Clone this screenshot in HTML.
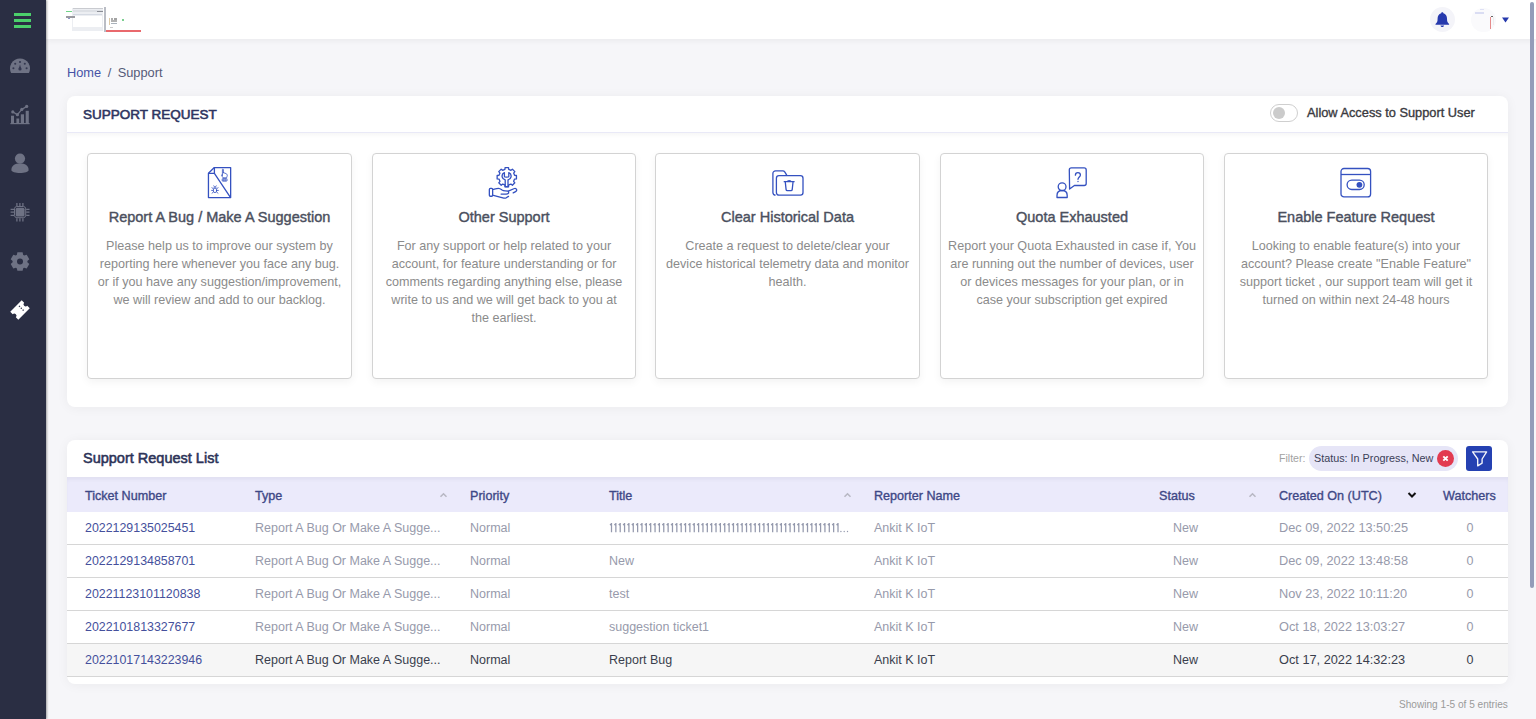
<!DOCTYPE html>
<html><head><meta charset="utf-8">
<style>
*{box-sizing:border-box;margin:0;padding:0}
html,body{width:1536px;height:719px;overflow:hidden;background:#f6f6f9;font-family:"Liberation Sans",sans-serif;position:relative}
.abs{position:absolute}
#side{left:0;top:0;width:46px;height:719px;background:#2a2e43;box-shadow:1px 0 2px rgba(0,0,0,0.35);z-index:5}
#hdr{left:46px;top:0;width:1490px;height:39px;background:#fff;box-shadow:0 2px 6px rgba(0,0,0,0.05)}
.t{position:absolute;white-space:nowrap;line-height:1}
.card{position:absolute;background:#fff;border-radius:8px;box-shadow:0 1px 12px rgba(0,0,0,0.05)}
.box{position:absolute;top:153px;width:265px;height:226px;border:1px solid #d3d3d3;border-radius:4px;background:#fff;box-shadow:0 3px 8px rgba(0,0,0,0.05)}
.box h3{position:absolute;left:0;right:0;top:210px;text-align:center;font-size:14.5px;font-weight:normal;-webkit-text-stroke:0.4px #4b505e;color:#4b505e;white-space:nowrap;line-height:16px}
.box p{position:absolute;left:-20px;right:-20px;white-space:nowrap;top:235px;text-align:center;font-size:12.6px;color:#8b8b8b;line-height:18.1px}
.th{position:absolute;top:489px;font-size:12.6px;font-weight:normal;-webkit-text-stroke:0.35px #3e4886;color:#3e4886;white-space:nowrap;line-height:14px}
.row{position:absolute;left:67px;width:1441px;height:33px;border-bottom:1px solid #d6d6d6;background:#fff}
.c{position:absolute;top:9px;font-size:12.5px;color:#979aab;white-space:nowrap;line-height:14px}
.c.num{color:#45509c;font-size:12.4px}
.row.hl{background:#f6f6f6}
.row.hl .c{color:#3a3e4d}
.row.hl .c.num{color:#45509c}
</style></head>
<body>
<div id="side" class="abs">
  <!-- hamburger -->
  <div class="abs" style="left:14px;top:13px;width:17px;height:2.5px;background:#4bcf6b"></div>
  <div class="abs" style="left:14px;top:19px;width:17px;height:2.5px;background:#4bcf6b"></div>
  <div class="abs" style="left:14px;top:25px;width:17px;height:2.5px;background:#4bcf6b"></div>
  <svg class="abs" style="left:10px;top:58px" width="20" height="16" viewBox="0 0 20 16">
    <path d="M1.1 15 A10 10 0 1 1 18.9 15 Z" fill="#6e7284"/>
    <g fill="#343850"><circle cx="10" cy="4" r="1.05"/><circle cx="5.2" cy="5.8" r="1.05"/><circle cx="14.8" cy="5.8" r="1.05"/><circle cx="3.4" cy="10.2" r="1.05"/><circle cx="16.6" cy="10.2" r="1.05"/><path d="M8.9 10.6 L10 6.4 L11.1 10.6 Z"/><circle cx="10" cy="10.9" r="1.6"/></g>
  </svg>
  <svg class="abs" style="left:10px;top:104px" width="20" height="21" viewBox="0 0 20 21">
    <g fill="#6e7284"><rect x="1" y="11.7" width="3" height="7.6"/><rect x="6.4" y="14.5" width="2.8" height="4.8"/><rect x="10.8" y="10.3" width="3.2" height="9"/><rect x="15.7" y="6.8" width="3.1" height="12.5"/><rect x="0.4" y="19" width="19.2" height="1.2"/>
    <circle cx="2.8" cy="7.9" r="1.6"/><circle cx="7.4" cy="10.7" r="1.6"/><circle cx="11.8" cy="5.4" r="1.6"/><circle cx="16.7" cy="2.4" r="1.6"/></g>
    <path d="M2.8 7.9 L7.4 10.7 L11.8 5.4 L16.7 2.4" stroke="#6e7284" stroke-width="1.3" fill="none"/>
  </svg>
  <svg class="abs" style="left:11px;top:153px" width="18" height="21" viewBox="0 0 18 21">
    <g fill="#6e7284"><circle cx="9" cy="5.6" r="5.1"/><path d="M0.4 17 C0.4 12.5 4 10.6 9 10.6 C14 10.6 17.6 12.5 17.6 17 C17.6 19 13.5 20 9 20 C4.5 20 0.4 19 0.4 17Z"/></g>
  </svg>
  <svg class="abs" style="left:10px;top:202px" width="21" height="21" viewBox="0 0 21 21">
    <g stroke="#6e7284" fill="none">
      <rect x="4.5" y="4.5" width="11.2" height="11.2" rx="2.4" stroke-width="1"/>
      <path d="M6.9 1V4M9.9 1V4M12.9 1V4M6.9 16.2V19.6M9.9 16.2V19.6M12.9 16.2V19.6M0.6 7.3H4M0.6 10.2H4M0.6 13.3H4M16.2 7.3H19.5M16.2 10.2H19.5M16.2 13.3H19.5" stroke-width="1.3"/>
    </g>
    <rect x="5.7" y="5.7" width="8.8" height="8.8" rx="1.6" fill="#6e7284"/>
  </svg>
  <svg class="abs" style="left:10px;top:251.6px" width="20" height="20" viewBox="0 0 20 20">
    <path d="M6.80 2.93 L7.40 0.36 L12.60 0.36 L13.20 2.93 L13.45 3.05 L13.70 3.19 L13.94 3.34 L14.18 3.49 L16.70 2.73 L19.30 7.23 L17.38 9.04 L17.39 9.32 L17.40 9.60 L17.39 9.88 L17.38 10.16 L19.30 11.97 L16.70 16.47 L14.18 15.71 L13.94 15.86 L13.70 16.01 L13.45 16.15 L13.20 16.27 L12.60 18.84 L7.40 18.84 L6.80 16.27 L6.55 16.15 L6.30 16.01 L6.06 15.86 L5.82 15.71 L3.30 16.47 L0.70 11.97 L2.62 10.16 L2.61 9.88 L2.60 9.60 L2.61 9.32 L2.62 9.04 L0.70 7.23 L3.30 2.73 L5.82 3.49 L6.06 3.34 L6.30 3.19 L6.55 3.05Z" fill="#6e7284"/><circle cx="10" cy="9.6" r="3" fill="#2a2e43"/>
  </svg>
  <svg class="abs" style="left:9px;top:299px" width="22" height="22" viewBox="0 0 22 22">
    <g transform="translate(11 11) scale(0.92) translate(-11 -11) rotate(-45 11 11)"><path d="M2.2 4.8 H19.8 V8.6 A2.4 2.4 0 0 0 19.8 13.4 V17.2 H2.2 V13.4 A2.4 2.4 0 0 0 2.2 8.6 Z" fill="#fff"/>
    <g fill="#3a3e52"><rect x="12.6" y="7.1" width="1.5" height="1.5" rx=".5"/><rect x="12.6" y="9.9" width="1.5" height="1.5" rx=".5"/><rect x="12.6" y="12.7" width="1.5" height="1.5" rx=".5"/></g></g>
  </svg>
</div>
<div id="hdr" class="abs"></div>
<!-- logo thumbnail -->
<div class="abs" style="left:72px;top:8px;width:31px;height:23px;background:#eceef2"></div>
<div class="abs" style="left:73px;top:15.5px;width:29px;height:11.5px;background:#fff"></div>
<div class="abs" style="left:73px;top:8px;width:30px;height:1.2px;background:#c9cbd0"></div>
<div class="abs" style="left:73px;top:10.3px;width:30px;height:2px;background:#dde0e5"></div>
<div class="abs" style="left:97px;top:10.5px;width:6px;height:1.6px;background:#8a8d95"></div>
<div class="abs" style="left:73px;top:14px;width:29px;height:1px;background:#d5dae3"></div>
<div class="abs" style="left:66px;top:10.5px;width:5.5px;height:1.3px;background:#6fd487"></div>
<div class="abs" style="left:66px;top:16.3px;width:9px;height:1.4px;background:#9a9aa0"></div>
<div class="abs" style="left:67.5px;top:18px;width:2px;height:1px;background:#8d93c8"></div>
<div class="abs" style="left:104px;top:7px;width:2px;height:25px;background:#babdc5"></div>
<div class="abs" style="left:106px;top:30px;width:35px;height:2px;background:#e9696d"></div>
<div class="abs" style="left:109px;top:18px;width:1.2px;height:7px;background:#c9a66b;opacity:.6"></div>
<div class="abs" style="left:111px;top:18px;width:2px;height:1.5px;background:#777;opacity:.6"></div>
<div class="abs" style="left:114px;top:18px;width:3px;height:1.5px;background:#666;opacity:.6"></div>
<div class="abs" style="left:111px;top:20px;width:6px;height:1.5px;background:#666;opacity:.5"></div>
<div class="abs" style="left:111px;top:22.5px;width:6px;height:1.5px;background:#567;opacity:.5"></div>
<div class="abs" style="left:121.5px;top:19px;width:2.5px;height:1.7px;background:#7ccf90"></div>
<div class="abs" style="left:110px;top:27px;width:3px;height:1px;background:#999;opacity:.5"></div>
<!-- bell -->
<div class="abs" style="left:1430px;top:7px;width:25px;height:25px;border-radius:50%;background:#f4f4f9"></div>
<svg class="abs" style="left:1435px;top:12px" width="15" height="15" viewBox="0 0 15 15">
  <path d="M7.3 0.2 C8 0.2 8.4 0.7 8.4 1.3 C10.8 1.9 12 4 12 6.4 L12.1 8.5 C12.2 10 13.2 11.2 14.1 12 V12.8 H0.5 V12 C1.4 11.2 2.4 10 2.5 8.5 L2.6 6.4 C2.6 4 3.8 1.9 6.2 1.3 C6.2 0.7 6.6 0.2 7.3 0.2 Z M5.5 13.4 H9.1 C9.1 14.3 8.3 14.9 7.3 14.9 C6.3 14.9 5.5 14.3 5.5 13.4Z" fill="#2639ad"/>
</svg>
<!-- avatar -->
<div class="abs" style="left:1471px;top:7.5px;width:24.5px;height:24.5px;border-radius:50%;background:#fafafc"></div>
<div class="abs" style="left:1475px;top:12px;width:9px;height:1.5px;background:#ccd0f0;opacity:.7"></div>
<div class="abs" style="left:1480px;top:9px;width:4px;height:1px;background:#ccd0f0;opacity:.6"></div>
<div class="abs" style="left:1490px;top:17px;width:1.2px;height:12px;background:#e58b8b"></div>
<div class="abs" style="left:1492.5px;top:17px;width:1px;height:8px;background:#eee"></div>
<div class="abs" style="left:1491px;top:15.5px;width:2px;height:1.6px;background:#666"></div>
<svg class="abs" style="left:1502px;top:17px" width="7" height="6" viewBox="0 0 7 6"><path d="M0 0.5H7L3.5 5.5Z" fill="#2639ad"/></svg>


<!-- breadcrumb -->
<div class="t" style="left:67px;top:66.5px;font-size:12.8px;color:#4753a6">Home<span style="color:#555a78;margin-left:6.5px">/</span><span style="color:#555a78;margin-left:6.5px">Support</span></div>

<!-- support request card -->
<div class="card" style="left:67px;top:96px;width:1441px;height:311px"></div>
<div class="abs" style="left:67px;top:132px;width:1441px;height:1px;background:#e9e9f7"></div><div class="abs" style="left:67px;top:133px;width:1441px;height:5px;background:linear-gradient(rgba(0,0,0,0.03),rgba(0,0,0,0))"></div>
<div class="t" style="left:83px;top:107.5px;font-size:13.5px;-webkit-text-stroke:0.6px #2e3561;color:#2e3561">SUPPORT REQUEST</div>
<div class="abs" style="left:1270px;top:104px;width:28px;height:18px;border:1px solid #cfcfcf;border-radius:9px;background:#fff"></div>
<div class="abs" style="left:1273px;top:107px;width:12px;height:12px;border-radius:50%;background:#cbcbcb"></div>
<div class="t" style="left:1307px;top:106.5px;font-size:12.8px;-webkit-text-stroke:0.35px #3a3a40;color:#3a3a40">Allow Access to Support User</div>

<div class="box" style="left:87px"><h3 style="top:55px">Report A Bug / Make A Suggestion</h3><p style="top:82.5px">Please help us to improve our system by<br>reporting here whenever you face any bug.<br>or if you have any suggestion/improvement,<br>we will review and add to our backlog.</p></div>
<div class="box" style="left:372px;width:264px"><h3 style="top:55px">Other Support</h3><p style="top:82.5px">For any support or help related to your<br>account, for feature understanding or for<br>comments regarding anything else, please<br>write to us and we will get back to you at<br>the earliest.</p></div>
<div class="box" style="left:655px"><h3 style="top:55px">Clear Historical Data</h3><p style="top:82.5px">Create a request to delete/clear your<br>device historical telemetry data and monitor<br>health.</p></div>
<div class="box" style="left:940px;width:264px"><h3 style="top:55px">Quota Exhausted</h3><p style="top:82.5px">Report your Quota Exhausted in case if, You<br>are running out the number of devices, user<br>or devices messages for your plan, or in<br>case your subscription get expired</p></div>
<div class="box" style="left:1224px;width:264px"><h3 style="top:55px">Enable Feature Request</h3><p style="top:82.5px">Looking to enable feature(s) into your<br>account? Please create "Enable Feature"<br>support ticket , our support team will get it<br>turned on within next 24-48 hours</p></div>


<svg class="abs" style="left:207px;top:166px" width="26" height="34" viewBox="0 0 26 34">
  <g stroke="#3451c0" stroke-width="1.3" fill="none" stroke-linejoin="round" stroke-linecap="round">
    <path d="M1.45 7.3 L7.3 1.55 H23.65 V31.55 H1.45 Z"/><path d="M2 7.4 H7.4 V2"/><path d="M7.4 7.4 L23.4 31.3"/>
  </g>
  <g stroke="#3451c0" stroke-width="0.8" fill="none" stroke-linejoin="round" stroke-linecap="round">
    <path d="M15.4 9.6 V3.6 C15.4 2.8 16.4 2.8 16.4 3.6 V6.8 M16.4 6.6 L19 7.6 C20.3 8.1 20.6 9.4 20 10.6 L19.6 11.8 H16 L14.6 9.6 C14.2 8.9 14.9 8.3 15.4 8.8"/>
    <path d="M15.6 12.8 H20 V15 H15.6 Z M16.8 12.8 V15 M18.2 12.8 V15"/>
    <ellipse cx="8" cy="24.4" rx="1.7" ry="2.3"/><path d="M6.9 21.5 C7 20.6 9 20.6 9.1 21.5"/>
    <path d="M7.3 20.6 L6.8 19.8 M8.7 20.6 L9.2 19.8 M6.3 22.6 L4.9 21.8 M9.7 22.6 L11.1 21.8 M6.3 24.4 H4.6 M9.7 24.4 H11.4 M6.5 25.9 L5 27.2 M9.5 25.9 L11 27.2"/>
  </g>
</svg>
<svg class="abs" style="left:484px;top:160px" width="40" height="45" viewBox="0 0 40 45">
  <g stroke="#3451c0" stroke-width="1.3" fill="none" stroke-linejoin="round" stroke-linecap="round">
    <path d="M20.90 9.43 L21.08 7.55 L24.52 7.55 L24.70 9.43 L26.95 10.36 L28.40 9.16 L30.84 11.60 L29.64 13.05 L30.57 15.30 L32.45 15.48 L32.45 18.92 L30.57 19.10 L29.64 21.35 L30.84 22.80 L28.40 25.24 L26.95 24.04 L24.70 24.97 L24.52 26.85 L21.08 26.85 L20.90 24.97 L18.65 24.04 L17.20 25.24 L14.76 22.80 L15.96 21.35 L15.03 19.10 L13.15 18.92 L13.15 15.48 L15.03 15.30 L15.96 13.05 L14.76 11.60 L17.20 9.16 L18.65 10.36Z"/>
    <path d="M20.4 12.6 C18.6 13.4 17.8 15.2 18.2 17 C18.5 18.3 19.6 19.4 21.2 19.9 V26.6 H24 V19.9 C25.6 19.4 26.7 18.3 27 17 C27.4 15.2 26.6 13.4 24.8 12.6 V16.4 C24.8 17.4 20.4 17.4 20.4 16.4 Z"/>
    <rect x="5.35" y="28.45" width="3.3" height="7.8" rx="1"/>
    <path d="M9.35 29.35 C11 28.9 12.6 28.3 14.5 28.3 C16 28.3 17 29.2 18 30 C19 30.7 20 30.9 21.2 30.9 L24 31.2 C24.8 31.5 24.8 33 24.2 33.5 C23.6 34 22.9 34.1 22.2 34.1 L17.1 34.1"/>
    <path d="M24.3 31.1 L30.4 28.5 C31.4 28.2 32.3 28.8 32.6 29.6 C32.9 30.5 32.4 31.2 31.6 31.6 L29.2 32.9"/>
    <path d="M9.35 35.4 L19.8 38.1 C20.6 38.3 21.4 38.2 22.2 37.8 L24.5 36.4"/>
  </g>
</svg>
<svg class="abs" style="left:772px;top:170px" width="32" height="28" viewBox="0 0 32 28">
  <g stroke="#3451c0" stroke-width="1.3" fill="none" stroke-linejoin="round">
    <path d="M3.6 25.2 C2 25.2 0.9 24.2 0.9 22.6 V3.5 C0.9 2 2 0.9 3.6 0.9 H10.8 C11.8 0.9 12.4 1.4 12.9 2.1 L15 5.6"/>
    <rect x="4.4" y="5.6" width="26.6" height="19.6" rx="2.6"/>
    <path d="M11.7 11.7 H22.6 M15.4 11.7 C15.4 10.3 19 10.3 19 11.7 M13.3 12.2 L14.1 19.6 C14.2 20.4 14.6 20.6 15.3 20.6 H19 C19.7 20.6 20.1 20.4 20.2 19.6 L21 12.2"/>
  </g>
</svg>
<svg class="abs" style="left:1055px;top:166px" width="34" height="33" viewBox="0 0 34 33">
  <g stroke="#3451c0" stroke-width="1.3" fill="none" stroke-linejoin="round" stroke-linecap="round">
    <path d="M14.3 3.8 C14.3 2.4 15.2 1.8 16.4 1.8 H29.1 C30.4 1.8 31.2 2.6 31.2 3.9 V17.4 C31.2 18.7 30.4 19.5 29.1 19.5 H19.4 L14.6 23.1 Z"/>
    <path d="M20.4 9.2 C20.4 7.6 21.4 6.6 22.9 6.6 C24.4 6.6 25.4 7.6 25.4 8.9 C25.4 10.9 23 11 23 13.3 M23 15.4 V15.6"/>
    <circle cx="7.1" cy="20.7" r="3.9"/>
    <path d="M2 31.5 V29.4 C2 26.4 4.2 24.5 7.1 24.5 C10 24.5 12.2 26.4 12.2 29.4 V31.5 Z"/>
  </g>
</svg>
<svg class="abs" style="left:1340px;top:167px" width="32" height="31" viewBox="0 0 32 31">
  <g stroke="#3451c0" stroke-width="1.3" fill="none">
    <rect x="1" y="1.5" width="29.6" height="28.4" rx="3"/><path d="M1 7.5 H30.6"/>
    <rect x="7.1" y="13.1" width="17.1" height="9.4" rx="4.7"/>
  </g>
  <circle cx="19.4" cy="17.8" r="2.9" fill="#3451c0"/>
</svg>
<!-- list card -->
<div class="card" style="left:67px;top:440px;width:1441px;height:244px;overflow:hidden"></div>
<div class="t" style="left:83px;top:450.5px;font-size:14.5px;-webkit-text-stroke:0.55px #2c3358;color:#2c3358">Support Request List</div>
<div class="abs" style="left:67px;top:477px;width:1441px;height:35px;background:#ebeafb;box-shadow:inset 0 4px 4px -2px rgba(60,60,90,0.07)"></div>

<div class="t" style="left:1279px;top:453px;font-size:10.6px;color:#a2a2a2">Filter:</div>
<div class="abs" style="left:1309px;top:446px;width:149px;height:25px;border-radius:13px;background:#e6e5f7"></div>
<div class="t" style="left:1314px;top:452.5px;font-size:10.8px;color:#3b3e58">Status: In Progress, New</div>
<div class="abs" style="left:1437px;top:450px;width:17px;height:17px;border-radius:50%;background:#e23a50"></div>
<svg class="abs" style="left:1442px;top:455px" width="7" height="7" viewBox="0 0 7 7"><path d="M1.3 1.3L5.7 5.7M5.7 1.3L1.3 5.7" stroke="#fff" stroke-width="1.9"/></svg>
<div class="abs" style="left:1466px;top:446px;width:26px;height:25px;border-radius:3px;background:#2541b2"></div>
<svg class="abs" style="left:1470px;top:449px" width="18" height="19" viewBox="0 0 18 19"><path d="M2.6 2.8 H16.6 L12.1 10 V14.2 L7.7 16.8 V10 Z" stroke="#f4f5fb" stroke-width="1.35" fill="none" stroke-linejoin="round"/></svg>
<svg class="abs" style="left:439px;top:492px" width="9" height="6" viewBox="0 0 9 6"><path d="M1.5 4.8 L4.5 1.8 L7.5 4.8" stroke="#b8b8c4" stroke-width="1.6" fill="none"/></svg>
<svg class="abs" style="left:843px;top:492px" width="9" height="6" viewBox="0 0 9 6"><path d="M1.5 4.8 L4.5 1.8 L7.5 4.8" stroke="#b8b8c4" stroke-width="1.6" fill="none"/></svg>
<svg class="abs" style="left:1248px;top:492px" width="9" height="6" viewBox="0 0 9 6"><path d="M1.5 4.8 L4.5 1.8 L7.5 4.8" stroke="#b8b8c4" stroke-width="1.6" fill="none"/></svg>
<svg class="abs" style="left:1407px;top:491px" width="10" height="8" viewBox="0 0 10 8"><path d="M1.5 2 L5 5.5 L8.5 2" stroke="#111" stroke-width="2" fill="none"/></svg>
<div class="th" style="left:85px">Ticket Number</div>
<div class="th" style="left:255px">Type</div>
<div class="th" style="left:470px">Priority</div>
<div class="th" style="left:609px">Title</div>
<div class="th" style="left:874px">Reporter Name</div>
<div class="th" style="left:1159px">Status</div>
<div class="th" style="left:1279px">Created On (UTC)</div>
<div class="th" style="left:1443px">Watchers</div>

<div class="row" style="top:512px"><div class="c num" style="left:18px">2022129135025451</div><div class="c" style="left:188px">Report A Bug Or Make A Sugge...</div><div class="c" style="left:403px">Normal</div><svg class="abs" style="left:542px;top:11px" width="245" height="12" viewBox="0 0 245 12"><path d="M2.50 9.2V0.6L1.00 2.0M6.86 9.2V0.6L5.36 2.0M11.21 9.2V0.6L9.71 2.0M15.57 9.2V0.6L14.07 2.0M19.92 9.2V0.6L18.42 2.0M24.28 9.2V0.6L22.78 2.0M28.64 9.2V0.6L27.14 2.0M32.99 9.2V0.6L31.49 2.0M37.35 9.2V0.6L35.85 2.0M41.70 9.2V0.6L40.20 2.0M46.06 9.2V0.6L44.56 2.0M50.42 9.2V0.6L48.92 2.0M54.77 9.2V0.6L53.27 2.0M59.13 9.2V0.6L57.63 2.0M63.48 9.2V0.6L61.98 2.0M67.84 9.2V0.6L66.34 2.0M72.20 9.2V0.6L70.70 2.0M76.55 9.2V0.6L75.05 2.0M80.91 9.2V0.6L79.41 2.0M85.26 9.2V0.6L83.76 2.0M89.62 9.2V0.6L88.12 2.0M93.98 9.2V0.6L92.48 2.0M98.33 9.2V0.6L96.83 2.0M102.69 9.2V0.6L101.19 2.0M107.04 9.2V0.6L105.54 2.0M111.40 9.2V0.6L109.90 2.0M115.76 9.2V0.6L114.26 2.0M120.11 9.2V0.6L118.61 2.0M124.47 9.2V0.6L122.97 2.0M128.82 9.2V0.6L127.32 2.0M133.18 9.2V0.6L131.68 2.0M137.54 9.2V0.6L136.04 2.0M141.89 9.2V0.6L140.39 2.0M146.25 9.2V0.6L144.75 2.0M150.60 9.2V0.6L149.10 2.0M154.96 9.2V0.6L153.46 2.0M159.32 9.2V0.6L157.82 2.0M163.67 9.2V0.6L162.17 2.0M168.03 9.2V0.6L166.53 2.0M172.38 9.2V0.6L170.88 2.0M176.74 9.2V0.6L175.24 2.0M181.10 9.2V0.6L179.60 2.0M185.45 9.2V0.6L183.95 2.0M189.81 9.2V0.6L188.31 2.0M194.16 9.2V0.6L192.66 2.0M198.52 9.2V0.6L197.02 2.0M202.88 9.2V0.6L201.38 2.0M207.23 9.2V0.6L205.73 2.0M211.59 9.2V0.6L210.09 2.0M215.94 9.2V0.6L214.44 2.0M220.30 9.2V0.6L218.80 2.0M224.66 9.2V0.6L223.16 2.0M229.01 9.2V0.6L227.51 2.0" stroke="#9499ad" stroke-width="1.25" fill="none"/><g fill="#9499ad"><circle cx="231.9" cy="8.5" r=".7"/><circle cx="235.2" cy="8.5" r=".7"/><circle cx="238.5" cy="8.5" r=".7"/></g></svg><div class="c" style="left:807px">Ankit K IoT</div><div class="c" style="left:1106px">New</div><div class="c" style="left:1212px;font-size:12.75px">Dec 09, 2022 13:50:25</div><div class="c" style="left:1399.5px">0</div></div>
<div class="row" style="top:545px"><div class="c num" style="left:18px">2022129134858701</div><div class="c" style="left:188px">Report A Bug Or Make A Sugge...</div><div class="c" style="left:403px">Normal</div><div class="c" style="left:542px">New</div><div class="c" style="left:807px">Ankit K IoT</div><div class="c" style="left:1106px">New</div><div class="c" style="left:1212px;font-size:12.75px">Dec 09, 2022 13:48:58</div><div class="c" style="left:1399.5px">0</div></div>
<div class="row" style="top:578px"><div class="c num" style="left:18px">20221123101120838</div><div class="c" style="left:188px">Report A Bug Or Make A Sugge...</div><div class="c" style="left:403px">Normal</div><div class="c" style="left:542px">test</div><div class="c" style="left:807px">Ankit K IoT</div><div class="c" style="left:1106px">New</div><div class="c" style="left:1212px;font-size:12.75px">Nov 23, 2022 10:11:20</div><div class="c" style="left:1399.5px">0</div></div>
<div class="row" style="top:611px"><div class="c num" style="left:18px">2022101813327677</div><div class="c" style="left:188px">Report A Bug Or Make A Sugge...</div><div class="c" style="left:403px">Normal</div><div class="c" style="left:542px">suggestion ticket1</div><div class="c" style="left:807px">Ankit K IoT</div><div class="c" style="left:1106px">New</div><div class="c" style="left:1212px;font-size:12.75px">Oct 18, 2022 13:03:27</div><div class="c" style="left:1399.5px">0</div></div>
<div class="row hl" style="top:644px"><div class="c num" style="left:18px">20221017143223946</div><div class="c" style="left:188px">Report A Bug Or Make A Sugge...</div><div class="c" style="left:403px">Normal</div><div class="c" style="left:542px">Report Bug</div><div class="c" style="left:807px">Ankit K IoT</div><div class="c" style="left:1106px">New</div><div class="c" style="left:1212px;font-size:12.75px">Oct 17, 2022 14:32:23</div><div class="c" style="left:1399.5px">0</div></div>
<div class="t" style="left:1399px;top:699.5px;font-size:10.1px;color:#9a9a9a">Showing 1-5 of 5 entries</div>

<!-- scrollbar -->
<div class="abs" style="left:1529.5px;top:2px;width:4.5px;height:586px;border-radius:3px;background:#949cb9"></div>
</body></html>
